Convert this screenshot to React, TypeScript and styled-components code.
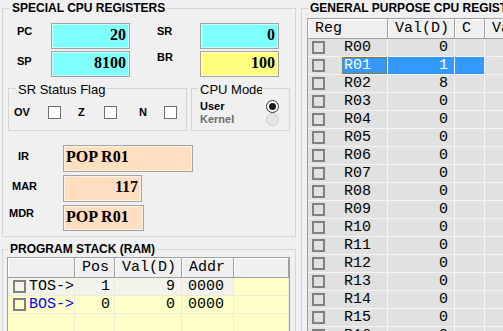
import React from "react";
import styled, { createGlobalStyle } from "styled-components";

const GlobalStyle = createGlobalStyle`
  html, body {
    margin: 0;
    padding: 0;
    background: #f0f0f0;
  }
  body {
    font-family: "Liberation Sans", Arial, sans-serif;
    overflow: hidden;
  }
`;

const generalRegs = Array.from({ length: 20 }, (_, i) => ({
  name: "R" + String(i).padStart(2, "0"),
  value: i === 1 ? 1 : i === 2 ? 8 : 0,
}));

const stackRows = [
  { label: "TOS->", pos: "1", val: "9", addr: "0000", tone: "top" },
  { label: "BOS->", pos: "0", val: "0", addr: "0000", tone: "bottom" },
  { label: "", pos: "", val: "", addr: "", tone: "empty" },
];

const App = (): JSX.Element => {
  return (
    <>
      <GlobalStyle />
      <Screen>
        <LeftColumn>
          <GroupBox $height={229}>
            <GroupTitle $offset={7}>SPECIAL CPU REGISTERS</GroupTitle>
            <RegRow $top={8} $height={26}>
              <RegLabel $width={48} $indent={14} $top={2}>PC</RegLabel>
              <Field $width={79} $bg="#80ffff" $align="right">20</Field>
              <RegLabel $width={70} $indent={27} $top={2}>SR</RegLabel>
              <Field $width={79} $bg="#80ffff" $align="right">0</Field>
            </RegRow>
            <RegRow $top={2} $height={26}>
              <RegLabel $width={48} $indent={14} $top={4}>SP</RegLabel>
              <Field $width={79} $bg="#80ffff" $align="right">8100</Field>
              <RegLabel $width={70} $indent={27} $top={0}>BR</RegLabel>
              <Field $width={79} $bg="#ffff80" $align="right">100</Field>
            </RegRow>
            <SubRow>
              <SubBox $width={179}>
                <SubTitle $offset={7}>SR Status Flag</SubTitle>
                <FlagRow>
                  <FlagLabel $gap={5} $width={34}>OV</FlagLabel>
                  <CheckBox />
                  <FlagLabel $gap={17} $width={26}>Z</FlagLabel>
                  <CheckBox />
                  <FlagLabel $gap={22} $width={25}>N</FlagLabel>
                  <CheckBox />
                </FlagRow>
              </SubBox>
              <SubBox $width={99}>
                <SubTitle $offset={6} $clip={60}>CPU Mode</SubTitle>
                <ModeList>
                  <ModeRow>
                    <ModeText>User</ModeText>
                    <Radio $checked />
                  </ModeRow>
                  <ModeRow>
                    <ModeText $disabled>Kernel</ModeText>
                    <Radio $disabled />
                  </ModeRow>
                </ModeList>
              </SubBox>
            </SubRow>
            <RegRow $top={14} $height={27}>
              <RegLabel $width={60} $indent={15} $top={5}>IR</RegLabel>
              <Field $width={130} $bg="#ffdfc0" $align="left">POP R01</Field>
            </RegRow>
            <RegRow $top={3} $height={27}>
              <RegLabel $width={60} $indent={9} $top={5}>MAR</RegLabel>
              <Field $width={79} $bg="#ffdfc0" $align="right">117</Field>
            </RegRow>
            <RegRow $top={3} $height={26}>
              <RegLabel $width={60} $indent={6} $top={2}>MDR</RegLabel>
              <Field $width={81} $bg="#ffdfc0" $align="left">POP R01</Field>
            </RegRow>
          </GroupBox>

          <StackGroup>
            <GroupTitle $offset={5}>PROGRAM STACK (RAM)</GroupTitle>
            <StackTable>
              <StackRow $header>
                <HeadCell />
                <HeadCell>Pos</HeadCell>
                <HeadCell>Val(D)</HeadCell>
                <HeadCell>Addr</HeadCell>
                <HeadCell />
              </StackRow>
              {stackRows.map((row, i) => (
                <StackRow key={i}>
                  <StackCell $tone={row.tone}>
                    {row.label && <SmallCheck />}
                    <StackLabel $blue={row.tone === "bottom"}>{row.label}</StackLabel>
                  </StackCell>
                  <StackCell $tone={row.tone} $align="right" $pad={4}>{row.pos}</StackCell>
                  <StackCell $tone={row.tone} $align="right" $pad={6}>{row.val}</StackCell>
                  <StackCell $tone={row.tone} $align="left" $pad={6}>{row.addr}</StackCell>
                  <StackCell $tone="empty" />
                </StackRow>
              ))}
            </StackTable>
          </StackGroup>
        </LeftColumn>

        <RightGroup>
          <GroupTitle $offset={6}>GENERAL PURPOSE CPU REGISTERS</GroupTitle>
          <RegGrid>
            <GridHeader>
              <HeadCell>Reg</HeadCell>
              <HeadCell>Val(D)</HeadCell>
              <HeadCell>C</HeadCell>
              <HeadCell>Va</HeadCell>
            </GridHeader>
            {generalRegs.map((reg, i) => {
              const selected = i === 1;
              return (
                <GridRow key={reg.name}>
                  <RegNameCell>
                    <CheckArea>
                      <GridCheck />
                    </CheckArea>
                    <RegName $selected={selected}>{reg.name}</RegName>
                  </RegNameCell>
                  <GridCell $selected={selected} $align="right">{reg.value}</GridCell>
                  <GridCell $selected={selected} />
                  <GridCell />
                </GridRow>
              );
            })}
          </RegGrid>
        </RightGroup>
      </Screen>
    </>
  );
};

export default App;

const Screen = styled.div`
  display: flex;
  width: 503px;
  height: 331px;
  overflow: hidden;
  background: #f0f0f0;
`;

const LeftColumn = styled.div`
  width: 296px;
  flex: none;
  display: flex;
  flex-direction: column;
  padding-left: 2px;
  box-sizing: border-box;
`;

const GroupBox = styled.div<{ $height: number }>`
  width: 294px;
  height: ${({ $height }) => $height}px;
  margin-top: 8px;
  border: 1px solid #d5d5d5;
  box-sizing: border-box;
  flex: none;
`;

const GroupTitle = styled.div<{ $offset: number }>`
  width: fit-content;
  margin: -8px 0 0 ${({ $offset }) => $offset}px;
  padding: 0 2px;
  background: #f0f0f0;
  font: bold 12px/14px "Liberation Sans", Arial, sans-serif;
  color: #000;
  white-space: nowrap;
`;

const RegRow = styled.div<{ $top: number; $height: number }>`
  display: flex;
  align-items: flex-start;
  height: ${({ $height }) => $height}px;
  margin-top: ${({ $top }) => $top}px;
`;

const RegLabel = styled.div<{ $width: number; $indent: number; $top: number }>`
  width: ${({ $width }) => $width}px;
  padding-left: ${({ $indent }) => $indent}px;
  padding-top: ${({ $top }) => $top}px;
  box-sizing: border-box;
  font: bold 11px/13px "Liberation Sans", Arial, sans-serif;
  color: #000;
  flex: none;
`;

const Field = styled.div<{ $width: number; $bg: string; $align: "left" | "right" }>`
  width: ${({ $width }) => $width}px;
  height: 100%;
  box-sizing: border-box;
  background: ${({ $bg }) => $bg};
  border: 1px solid #a3a3a3;
  box-shadow: inset 0 0 0 1px rgba(255, 255, 255, 0.55);
  text-align: ${({ $align }) => $align};
  padding: 0 ${({ $align }) => ($align === "right" ? "3px" : "0")} 0
    ${({ $align }) => ($align === "left" ? "2px" : "0")};
  font: bold 16px/22px "Liberation Serif", "Times New Roman", serif;
  color: #000;
  flex: none;
`;

const SubRow = styled.div`
  display: flex;
  gap: 4px;
  margin: 11px 0 0 5px;
`;

const SubBox = styled.div<{ $width: number }>`
  width: ${({ $width }) => $width}px;
  height: 43px;
  border: 1px solid #d5d5d5;
  box-sizing: border-box;
`;

const SubTitle = styled.div<{ $offset: number; $clip?: number }>`
  width: fit-content;
  max-width: ${({ $clip }) => ($clip ? `${$clip}px` : "none")};
  overflow: hidden;
  white-space: nowrap;
  margin: -6px 0 0 ${({ $offset }) => $offset}px;
  padding: 0 2px;
  background: #f0f0f0;
  font: 13px/14px "Liberation Sans", Arial, sans-serif;
  color: #000;
`;

const FlagRow = styled.div`
  display: flex;
  align-items: center;
  height: 13px;
  margin-top: 9px;
`;

const FlagLabel = styled.div<{ $gap: number; $width: number }>`
  margin-left: ${({ $gap }) => $gap}px;
  width: ${({ $width }) => $width}px;
  font: bold 11px/13px "Liberation Sans", Arial, sans-serif;
  color: #000;
`;

const CheckBox = styled.div`
  width: 13px;
  height: 13px;
  box-sizing: border-box;
  border: 1px solid #6f6f6f;
  background: #fff;
  flex: none;
`;

const ModeList = styled.div`
  display: flex;
  flex-direction: column;
  margin-top: 3px;
  padding: 0 10px 0 8px;
`;

const ModeRow = styled.div`
  display: flex;
  align-items: center;
  justify-content: space-between;
  height: 13px;
`;

const ModeText = styled.div<{ $disabled?: boolean }>`
  font: bold 11px/13px "Liberation Sans", Arial, sans-serif;
  color: ${({ $disabled }) => ($disabled ? "#6d6d6d" : "#000")};
`;

const Radio = styled.div<{ $checked?: boolean; $disabled?: boolean }>`
  width: 13px;
  height: 13px;
  box-sizing: border-box;
  border-radius: 50%;
  border: 1px solid ${({ $disabled }) => ($disabled ? "#cccccc" : "#333")};
  background: ${({ $disabled }) => ($disabled ? "#e6e6e6" : "#fff")};
  display: flex;
  align-items: center;
  justify-content: center;

  &::after {
    content: "";
    display: ${({ $checked }) => ($checked ? "block" : "none")};
    width: 7px;
    height: 7px;
    border-radius: 50%;
    background: #1a1a1a;
  }
`;

const StackGroup = styled.div`
  width: 294px;
  height: 100px;
  margin-top: 12px;
  border: 1px solid #d5d5d5;
  box-sizing: border-box;
  flex: none;
`;

const StackTable = styled.div`
  width: 283px;
  margin: 1px 0 0 4px;
  border-left: 1px solid #a0a0a0;
  border-top: 1px solid #a0a0a0;
  border-right: 1px solid #a0a0a0;
  box-sizing: border-box;
`;

const StackRow = styled.div<{ $header?: boolean }>`
  display: grid;
  grid-template-columns: 67px 40px 67px 52px 1fr;
  height: ${({ $header }) => ($header ? 20 : 18)}px;
`;

const HeadCell = styled.div`
  background: #f0f0f0;
  border-right: 1px solid #a0a0a0;
  border-bottom: 1px solid #a0a0a0;
  box-shadow: inset 1px 1px 0 #ffffff;
  padding-left: 7px;
  font: 15px/19px "Liberation Mono", "Courier New", monospace;
  color: #000;
  white-space: nowrap;
  overflow: hidden;
`;

const toneColor: Record<string, string> = {
  top: "#f3f3ec",
  bottom: "#ffffc8",
  empty: "#ffffc8",
};

const StackCell = styled.div<{ $tone: string; $align?: "left" | "right"; $pad?: number }>`
  display: flex;
  align-items: center;
  justify-content: ${({ $align }) => ($align === "right" ? "flex-end" : "flex-start")};
  padding: 0 ${({ $align, $pad }) => ($align === "right" ? $pad ?? 0 : 0)}px 0
    ${({ $align, $pad }) => ($align === "left" ? $pad ?? 0 : 0)}px;
  background: ${({ $tone }) => toneColor[$tone]};
  border-right: 1px solid #ececdc;
  border-bottom: 1px solid #ececdc;
  font: 15px/17px "Liberation Mono", "Courier New", monospace;
  color: #000;
  white-space: nowrap;
`;

const SmallCheck = styled.div`
  width: 13px;
  height: 13px;
  margin: 0 3px 0 5px;
  box-sizing: border-box;
  border: 2px solid #808080;
  flex: none;
`;

const StackLabel = styled.span<{ $blue: boolean }>`
  color: ${({ $blue }) => ($blue ? "#0000ff" : "#000")};
`;

const RightGroup = styled.div`
  width: 220px;
  height: 340px;
  margin: 8px 0 0 5px;
  border-left: 1px solid #d5d5d5;
  border-top: 1px solid #d5d5d5;
  box-sizing: border-box;
  flex: none;
`;

const RegGrid = styled.div`
  margin: 3px 0 0 5px;
  border-left: 1px solid #a0a0a0;
  box-shadow: inset 1px 0 0 #696969;
  width: 260px;
`;

const GridHeader = styled.div`
  display: grid;
  grid-template-columns: 80px 67px 30px 1fr;
  height: 20px;
  border-top: 1px solid #a0a0a0;
`;

const GridRow = styled.div`
  display: grid;
  grid-template-columns: 80px 67px 30px 1fr;
  height: 18px;
`;

const RegNameCell = styled.div`
  display: flex;
  background: #e1e1e1;
  border-right: 1px solid #f4f4f4;
  border-bottom: 1px solid #f4f4f4;
`;

const CheckArea = styled.div`
  width: 34px;
  flex: none;
  display: flex;
  align-items: center;
  padding-left: 4px;
  box-sizing: border-box;
`;

const GridCheck = styled.div`
  width: 13px;
  height: 13px;
  box-sizing: border-box;
  border: 2px solid #808080;
`;

const RegName = styled.div<{ $selected?: boolean }>`
  flex: 1;
  padding-left: 2px;
  background: ${({ $selected }) => ($selected ? "#3399ff" : "transparent")};
  outline: ${({ $selected }) => ($selected ? "1px dotted #8a6a2a" : "none")};
  outline-offset: -1px;
  color: ${({ $selected }) => ($selected ? "#fff" : "#000")};
  font: 15px/17px "Liberation Mono", "Courier New", monospace;
`;

const GridCell = styled.div<{ $selected?: boolean; $align?: "right" }>`
  background: ${({ $selected }) => ($selected ? "#3399ff" : "#e1e1e1")};
  color: ${({ $selected }) => ($selected ? "#fff" : "#000")};
  border-right: 1px solid #f4f4f4;
  border-bottom: 1px solid #f4f4f4;
  text-align: ${({ $align }) => $align ?? "left"};
  padding-right: 6px;
  font: 15px/17px "Liberation Mono", "Courier New", monospace;
`;
